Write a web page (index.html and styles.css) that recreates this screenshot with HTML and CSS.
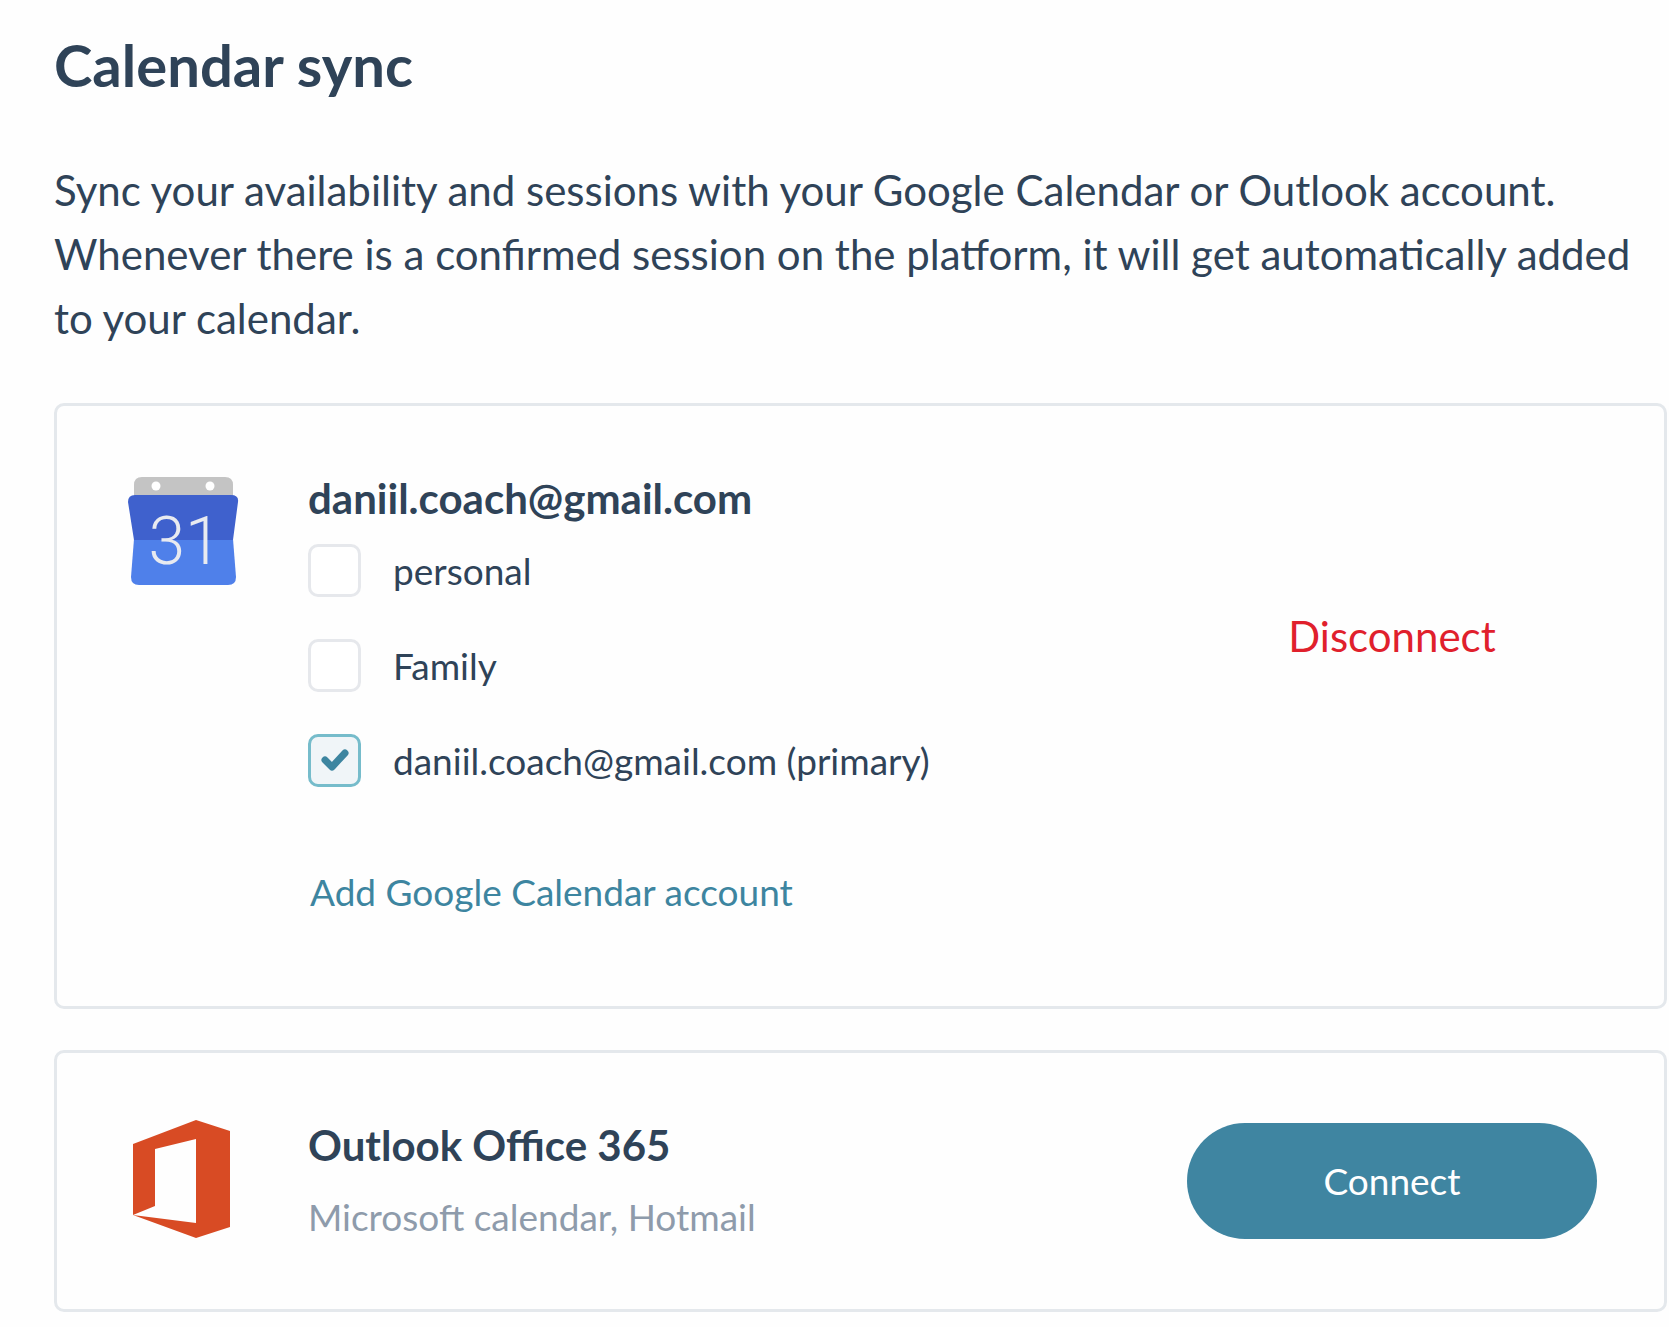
FILE: index.html
```
<!DOCTYPE html>
<html lang="en">
<head>
  <meta charset="UTF-8" />
  <meta name="viewport" content="width=device-width, initial-scale=1" />
  <title>Calendar sync</title>
  <link rel="stylesheet" href="styles.css">
</head>
<body>
  <main class="container">
    <h1>Calendar sync</h1>
    <p class="intro">Sync your availability and sessions with your Google Calendar or Outlook account. Whenever there is a confirmed session on the platform, it will get automatically added to your calendar.</p>

    <section class="card card-google">
      <div class="logo">
        <svg width="112" height="110" viewBox="0 0 112 110" aria-hidden="true">
          <path d="M6 20V8q0-8 8-8h83q8 0 8 8v12z" fill="#c4c4c4" />
          <circle cx="28" cy="9" r="4.500" fill="#fff" />
          <circle cx="82" cy="9" r="4.500" fill="#fff" />
          <path d="M6 62h99l3 38q0 8-8 8H11q-8 0-8-8z" fill="#4f80ea" />
          <path d="M0 25q0-7 7-7h96q8 0 7 7l-5 38H6z" fill="#3f61cd" />
          <text class="logo-day" x="57" y="87" text-anchor="middle">31</text>
        </svg>
      </div>
      <div class="info">
        <h2>daniil.coach@gmail.com</h2>
        <div class="calendars">
          <div class="check-row">
            <input type="checkbox" id="calPersonal" />
            <label for="calPersonal">personal</label>
          </div>
          <div class="check-row">
            <input type="checkbox" id="calFamily" />
            <label for="calFamily">Family</label>
          </div>
          <div class="check-row">
            <span class="check-box">
              <input type="checkbox" id="calPrimary" checked />
              <svg class="check-mark" width="28" height="22" viewBox="0 0 28 22" aria-hidden="true">
                <path d="M4 11l7 7L24 4" />
              </svg>
            </span>
            <label for="calPrimary">daniil.coach@gmail.com (primary)</label>
          </div>
        </div>
        <a class="add-link" href="#">Add Google Calendar account</a>
      </div>
      <div class="action">
        <button type="button" class="disconnect-btn">Disconnect</button>
      </div>
    </section>

    <section class="card card-outlook">
      <div class="logo">
        <svg width="112" height="118" viewBox="0 0 112 118" aria-hidden="true">
          <path fill="#d84b24" fill-rule="evenodd" d="M5 24L68 0l34 11v96l-34 11L5 95zM27 29v57L5 95l63 8V19z" />
        </svg>
      </div>
      <div class="info">
        <h2>Outlook Office 365</h2>
        <p class="subtitle">Microsoft calendar, Hotmail</p>
      </div>
      <div class="action">
        <button type="button" class="connect-btn">Connect</button>
      </div>
    </section>
  </main>
</body>
</html>
```

FILE: styles.css
```
* {
  box-sizing: border-box;
}

body {
  font-family: Lato, 'Liberation Sans', sans-serif;
  font-size: 37px;
  line-height: 48px;
  background: #fefefe;
  color: #2f4358;
  margin: 0;
}

.container {
  padding: 30px 2px 15px 54px;
}

h1, h2, p {
  margin: 0;
}

h1 {
  font-size: 58px;
  line-height: 70px;
  font-weight: 700;
}

h2 {
  font-size: 42px;
  line-height: 50px;
  font-weight: 700;
}

.intro {
  margin: 58px 0 53px;
  font-size: 42px;
  line-height: 64px;
}

/* Account cards */
.card {
  display: flex;
  padding: 67px 67px 68px 71px;
  border: 3px solid #e4e8ec;
  border-radius: 10px;
}

.card + .card {
  margin-top: 41px;
}

.logo {
  flex: none;
  width: 180px;
}

.logo svg {
  display: block;
}

.logo-day {
  font-family: Roboto, sans-serif;
  font-size: 66px;
  font-weight: 300;
  fill: #e8eaf0;
}

.info {
  flex: 1;
}

.action {
  display: flex;
  flex: none;
  align-items: center;
  justify-content: center;
  width: 410px;
}

.card-google {
  padding-bottom: 90px;
}

.card-google .logo {
  padding-top: 4px;
}

.card-google .action {
  padding-bottom: 118px;
}

/* Calendar list */
.calendars {
  display: flex;
  flex-direction: column;
  gap: 42px;
  margin: 21px 0 81px;
}

.check-row {
  display: flex;
  align-items: center;
  gap: 32px;
}

.check-box {
  position: relative;
  display: flex;
}

input[type="checkbox"] {
  appearance: none;
  width: 53px;
  height: 53px;
  margin: 0;
  border: 3px solid #e6e8ec;
  border-radius: 10px;
  background: #fff;
  cursor: pointer;
}

input[type="checkbox"]:checked {
  border-color: #76bccb;
  background: #f0f5f8;
}

.check-mark {
  position: absolute;
  top: 15px;
  left: 13px;
  fill: none;
  stroke: #3d85a0;
  stroke-width: 7;
  stroke-linecap: round;
  stroke-linejoin: round;
  pointer-events: none;
}

input:not(:checked) + .check-mark {
  display: none;
}

.add-link {
  padding: 0 2px;
  color: #3d85a0;
  text-decoration: none;
}

.subtitle {
  margin-top: 23px;
  color: #8e9bab;
}

/* Buttons */
button {
  border: none;
  font-family: inherit;
  cursor: pointer;
}

.disconnect-btn {
  padding: 0;
  background: none;
  color: #e0202c;
  font-size: 42px;
  line-height: 50px;
}

.connect-btn {
  width: 100%;
  padding: 34px 0;
  border-radius: 59px;
  background: #3f85a1;
  color: #fff;
  font-size: 37px;
  line-height: 48px;
}
```
